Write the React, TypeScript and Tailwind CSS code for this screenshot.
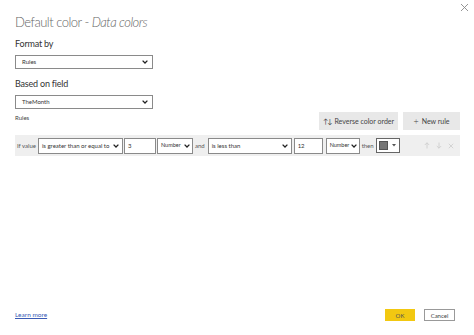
import React from "react";

const Chevron = () => (
  <svg width="6" height="4" viewBox="0 0 6 4" className="shrink-0">
    <path d="M0.6 0.6 L3 3 L5.4 0.6" fill="none" stroke="#222" strokeWidth="1.3" />
  </svg>
);

const Select = ({ text, className, textClass = "text-[6px]" }: { text: string; className: string; textClass?: string }) => (
  <div className={`flex shrink-0 items-center justify-between border border-[#8a8a8a] bg-white ${className}`}>
    <span className={`whitespace-nowrap leading-none text-[#333] ${textClass}`}>{text}</span>
    <Chevron />
  </div>
);

export default function App() {
  return (
    <div className="relative flex h-[335px] w-[474px] flex-col bg-white pl-[15px] pr-[14px] font-['Lato',sans-serif] text-[#333]">
      <div className="absolute right-[5px] top-[3px] text-[#888]">
        <svg width="9" height="9" viewBox="0 0 9 9">
          <path d="M1 1 L8 8 M8 1 L1 8" stroke="#8a8a8a" strokeWidth="0.9" />
        </svg>
      </div>
      <div className="mt-[12px] whitespace-nowrap text-[13px] font-light leading-[20px] tracking-[-0.5px] text-[#666]">
        Default color - <span className="italic">Data colors</span>
      </div>
      <div className="mt-[6px] text-[9px] leading-[12px] tracking-[-0.2px] text-[#333]">Format by</div>
      <Select text="Rules" className="mt-[5px] h-[14px] w-[138px] pl-[6px] pr-[4px]" />
      <div className="mt-[9px] text-[9px] leading-[12px] tracking-[-0.2px] text-[#333]">Based on field</div>
      <Select text="TheMonth" className="mt-[5px] h-[14px] w-[138px] pl-[6px] pr-[4px]" />
      <div className="mt-[3px] flex items-start justify-between">
        <div className="text-[6px] leading-[12px] text-[#444]">Rules</div>
        <div className="flex gap-[5px]">
          <div className="flex h-[18px] w-[79px] items-center justify-center gap-[3px] bg-[#e8e8e8] text-[7px] text-[#444]">
            <span className="text-[7px] tracking-[-1px]">↑↓</span>
            <span>Reverse color order</span>
          </div>
          <div className="flex h-[18px] w-[57px] items-center justify-center gap-[3px] bg-[#e8e8e8] text-[7px] text-[#444]">
            <span className="text-[9px] font-light leading-none">+</span>
            <span>New rule</span>
          </div>
        </div>
      </div>
      <div className="mt-[5px] flex h-[21px] items-center gap-[1px] bg-[#efefef] pl-[2px] text-[#555]">
        <span className="mr-[1px] whitespace-nowrap text-[6px] leading-none">If value</span>
        <Select text="is greater than or equal to" className="h-[16px] w-[85px] pl-[3px] pr-[3px]" />
        <div className="flex h-[16px] w-[32px] shrink-0 items-center border border-[#8a8a8a] bg-white pl-[3px] text-[6px] text-[#333]">3</div>
        <Select text="Number" textClass="text-[5.5px]" className="h-[16px] w-[36px] pl-[3px] pr-[2px]" />
        <span className="mx-[1px] text-[6px] leading-none">and</span>
        <Select text="is less than" className="ml-[1px] h-[16px] w-[84px] pl-[3px] pr-[3px]" />
        <div className="ml-[1px] flex h-[16px] w-[29px] shrink-0 items-center border border-[#8a8a8a] bg-white pl-[3px] text-[6px] text-[#333]">12</div>
        <Select text="Number" textClass="text-[5.5px]" className="ml-[2px] h-[16px] w-[34px] pl-[3px] pr-[2px]" />
        <span className="mx-[1px] text-[6px] leading-none">then</span>
        <div className="flex h-[15px] w-[24px] shrink-0 items-center gap-[4px] border border-[#666] bg-white pl-[2px]">
          <div className="h-[9px] w-[9px] border border-[#555] bg-[#777]" />
          <svg width="4" height="3" viewBox="0 0 4 3"><path d="M0 0 L4 0 L2 2.5 Z" fill="#555" /></svg>
        </div>
        <div className="ml-auto mr-[6px] flex items-center gap-[6px]">
          <svg width="6" height="7" viewBox="0 0 6 7"><path d="M3 6.5 V0.8 M0.8 3 L3 0.8 L5.2 3" fill="none" stroke="#ccc" strokeWidth="0.8" /></svg>
          <svg width="6" height="7" viewBox="0 0 6 7"><path d="M3 0.5 V6.2 M0.8 4 L3 6.2 L5.2 4" fill="none" stroke="#ccc" strokeWidth="0.8" /></svg>
          <svg width="6" height="6" viewBox="0 0 6 6"><path d="M0.8 0.8 L5.2 5.2 M5.2 0.8 L0.8 5.2" fill="none" stroke="#ccc" strokeWidth="0.8" /></svg>
        </div>
      </div>
      <div className="mt-auto mb-[14px] flex items-center justify-between">
        <span className="text-[6.5px] leading-[12px] text-[#3b5bb5] underline">Learn more</span>
        <div className="mr-[5px] flex gap-[9px]">
          <div className="flex h-[12px] w-[30px] items-center justify-center bg-[#f2c811] text-[6px] text-[#555]">OK</div>
          <div className="flex h-[12px] w-[31px] items-center justify-center border border-[#999] bg-white text-[6px] text-[#444]">Cancel</div>
        </div>
      </div>
    </div>
  );
}
